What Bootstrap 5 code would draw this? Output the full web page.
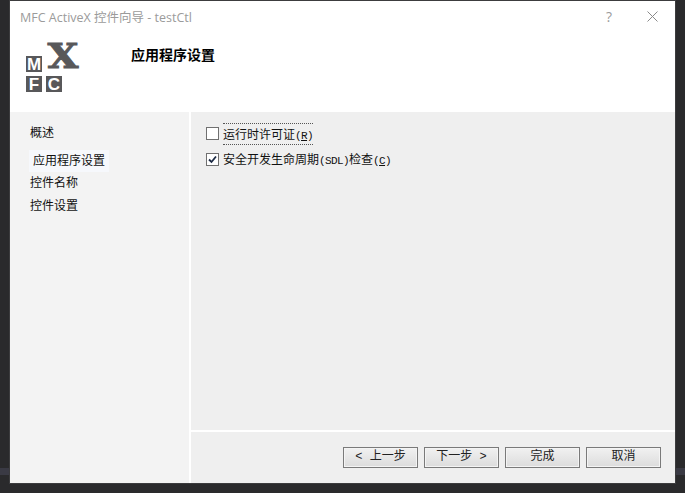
<!DOCTYPE html>
<html lang="zh">
<head>
<meta charset="utf-8">
<title>MFC ActiveX 控件向导</title>
<link href="https://cdn.jsdelivr.net/npm/bootstrap@5.3.0/dist/css/bootstrap.min.css" rel="stylesheet">
<style>
html,body{height:100%;margin:0;overflow:hidden}
body{background:linear-gradient(transparent 468px,#3a3a44 468px,#3a3a44 475px,transparent 475px),#2a2a2c;font-family:"Noto Sans CJK SC","Liberation Sans",sans-serif;font-size:12px;color:#111;padding:1px 10px 10px}
.wiz{height:482px;background:#fff;outline:1px solid #3c3c3e}
.wiz-title{height:33px;padding-left:10px;padding-right:17px;color:#9b9b9b;font:12.5px/33px "Open Sans","Noto Sans CJK SC",sans-serif}
.wiz-ctrl{padding-bottom:2px}
.wiz-help{width:14px;text-align:center;margin-right:31px;font-size:14px}
.wiz-head{height:78px}
.wiz-logo{margin-left:16px;width:54px;height:50px;margin-top:9px;overflow:visible}
.wiz-logo text{font-family:"Liberation Sans",sans-serif;font-weight:700;fill:#fff;font-size:17px;text-anchor:middle}
.wiz-logo .big{font-family:"DejaVu Serif",serif;fill:#58585a;stroke:#58585a;stroke-width:.8px;font-size:34px}
.wiz-heading{margin-left:51px;margin-top:10px;font-weight:700;font-size:14px;line-height:20px;color:#000}
.wiz-body{height:371px;gap:2px}
.wiz-side{width:179px;background:#f3f3f3;padding-top:8px;padding-left:20px}
.wiz-side div{line-height:19px;height:23px}
.wiz-side .first{height:30px;line-height:23px}
.wiz-side .on{background:#f6f8fc;width:80px;height:22px;line-height:20px;margin-left:-1px;padding-left:4px}
.wiz-main{background:#efefef;flex:1}
.wiz-opts{flex:1;padding:8px 0 0 15px}
.wiz-opt{height:26px;gap:4px;line-height:26px}
.wiz-opt span{white-space:nowrap}
.wiz-opt>span:last-child{padding-top:2px}
.wiz-box{width:13px;height:13px;border:1px solid #707070;background:#fff;flex:none}
.wiz-box svg{display:block}
.wiz-opt .wiz-dot{border-bottom:1px dotted #555;border-top:1px dotted #555;line-height:15px;padding-top:0;margin-top:2px}
.wiz-lat{font-family:"Liberation Mono",monospace;font-size:11px;letter-spacing:-.6px}
.wiz-foot{border-top:2px solid #fff;height:53px;padding:15px 14px 0 0;gap:6px;justify-content:flex-end}
.wiz-btn{width:75px;height:21px;border:1px solid #7a7a7a;background:linear-gradient(#f1f1f1,#dcdcdc);box-shadow:inset 0 0 0 1px #f4f4f4;color:#222;font:12px/19px "Liberation Mono","Noto Sans CJK SC",monospace;padding:0;border-radius:0}
</style>
</head>
<body>
<div class="wiz d-flex flex-column">
  <div class="wiz-title d-flex justify-content-between flex-none">
    <span>MFC ActiveX 控件向导 - testCtl</span>
    <span class="wiz-ctrl d-flex align-items-center">
      <span class="wiz-help">?</span>
      <svg width="11" height="11" viewBox="0 0 11 11"><path d="M.5.5l10 10M10.500.5l-10 10" stroke="#8a8a8a" fill="none"/></svg>
    </span>
  </div>
  <div class="wiz-head d-flex">
    <svg class="wiz-logo" viewBox="0 0 54 50" role="img" aria-label="MFC">
      <rect x="0" y="13" width="16" height="16" fill="#58585a"/>
      <rect x="0" y="33" width="16" height="16" fill="#58585a"/>
      <rect x="20" y="33" width="16" height="16" fill="#58585a"/>
      <text x="8" y="27">M</text><text x="8" y="47">F</text><text x="28" y="47">C</text>
      <text class="big" x="37" y="25" textLength="31" lengthAdjust="spacingAndGlyphs">X</text>
    </svg>
    <div class="wiz-heading">应用程序设置</div>
  </div>
  <div class="wiz-body d-flex">
    <div class="wiz-side">
      <div class="first">概述</div>
      <div class="on">应用程序设置</div>
      <div>控件名称</div>
      <div>控件设置</div>
    </div>
    <div class="wiz-main d-flex flex-column">
      <div class="wiz-opts">
        <div class="wiz-opt d-flex align-items-center"><span class="wiz-box"></span><span class="wiz-dot">运行时许可证<span class="wiz-lat">(<u>R</u>)</span></span></div>
        <div class="wiz-opt d-flex align-items-center"><span class="wiz-box"><svg width="11" height="11" viewBox="0 0 11 11"><path d="M2 5.500l2.500 2.500L9 2.500" stroke="#1c2a44" stroke-width="1.800" fill="none"/></svg></span><span>安全开发生命周期<span class="wiz-lat">(SDL)</span>检查<span class="wiz-lat">(<u>C</u>)</span></span></div>
      </div>
      <div class="wiz-foot d-flex">
        <button class="wiz-btn btn" type="button">&lt; 上一步</button>
        <button class="wiz-btn btn" type="button">下一步 &gt;</button>
        <button class="wiz-btn btn" type="button">完成</button>
        <button class="wiz-btn btn" type="button">取消</button>
      </div>
    </div>
  </div>
</div>
<script src="https://cdn.jsdelivr.net/npm/bootstrap@5.3.0/dist/js/bootstrap.bundle.min.js"></script>
</body>
</html>
